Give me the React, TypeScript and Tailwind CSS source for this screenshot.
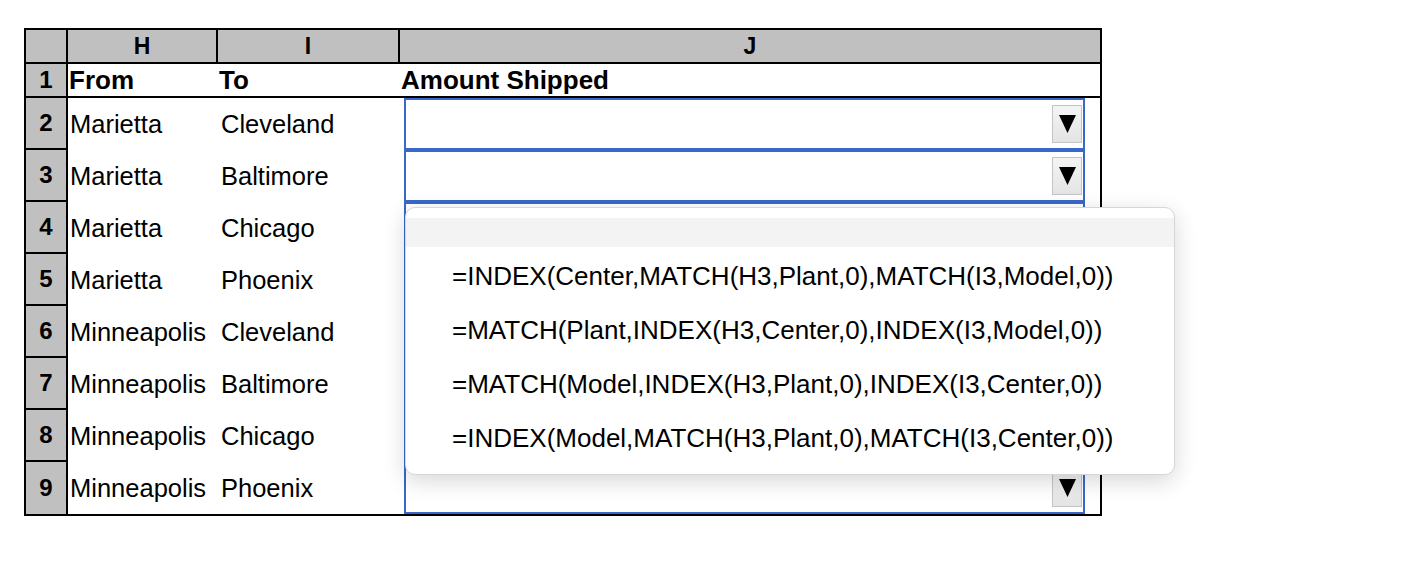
import React from 'react';

const font = { fontFamily: '"Liberation Sans", Arial, Helvetica, sans-serif' };

const rows = [
  { n: 2, from: 'Marietta', to: 'Cleveland' },
  { n: 3, from: 'Marietta', to: 'Baltimore' },
  { n: 4, from: 'Marietta', to: 'Chicago' },
  { n: 5, from: 'Marietta', to: 'Phoenix' },
  { n: 6, from: 'Minneapolis', to: 'Cleveland' },
  { n: 7, from: 'Minneapolis', to: 'Baltimore' },
  { n: 8, from: 'Minneapolis', to: 'Chicago' },
  { n: 9, from: 'Minneapolis', to: 'Phoenix' },
];

const options = [
  '=INDEX(Center,MATCH(H3,Plant,0),MATCH(I3,Model,0))',
  '=MATCH(Plant,INDEX(H3,Center,0),INDEX(I3,Model,0))',
  '=MATCH(Model,INDEX(H3,Plant,0),INDEX(I3,Center,0))',
  '=INDEX(Model,MATCH(H3,Plant,0),MATCH(I3,Center,0))',
];

const DropdownCell: React.FC = () => (
  <div className="ml-[4px] w-[681px] h-[52px] border-2 border-[#3a68c8] flex items-center justify-end pr-[1px]">
    <div className="w-[30px] h-[38px] bg-gradient-to-b from-[#f4f4f4] to-[#e4e4e4] border border-[#c4c4c4] flex items-center justify-center">
      <svg width="17" height="18" viewBox="0 0 17 18">
        <polygon points="0,0 17,0 8.5,18" fill="#000" />
      </svg>
    </div>
  </div>
);

export default function App() {
  return (
    <div className="relative w-[1428px] h-[568px] bg-white text-black" style={font}>
      <div className="absolute left-0 top-0 pl-[24px] pt-[28px]">
        <div className="w-[1078px] border-2 border-black">
          {/* column letters */}
          <div className="flex h-[34px] bg-[#c0c0c0] border-b-2 border-black font-bold text-[23px]">
            <div className="w-[42px] border-r-2 border-black" />
            <div className="w-[150px] border-r-2 border-black flex items-center justify-center">H</div>
            <div className="w-[182px] border-r-2 border-black flex items-center justify-center">I</div>
            <div className="flex-1 flex items-center justify-center">J</div>
          </div>

          {/* row 1: headings */}
          <div className="flex h-[34px] border-b-2 border-black">
            <div className="w-[42px] bg-[#c0c0c0] border-r-2 border-black flex items-center justify-center font-bold text-[24px]">1</div>
            <div className="w-[150px] pl-[1px] flex items-center font-bold text-[26px]">From</div>
            <div className="w-[182px] pl-[1px] flex items-center font-bold text-[26px]">To</div>
            <div className="flex-1 pl-[1px] flex items-center font-bold text-[26px]">Amount Shipped</div>
          </div>

          {rows.map((r, i) => (
            <div key={r.n} className="flex h-[52px]">
              <div
                className={
                  'w-[42px] bg-[#c0c0c0] border-r-2 border-black flex items-center justify-center font-bold text-[24px] ' +
                  (i < rows.length - 1 ? 'border-b-2' : '')
                }
              >
                {r.n}
              </div>
              <div className="w-[150px] pl-[2px] flex items-center text-[25.5px] whitespace-nowrap">{r.from}</div>
              <div className="w-[182px] pl-[3px] flex items-center text-[25.5px] whitespace-nowrap">{r.to}</div>
              <div className="flex-1">
                <DropdownCell />
              </div>
            </div>
          ))}
        </div>
      </div>

      {/* open dropdown list */}
      <div className="absolute left-[405px] top-[207px] w-[770px] h-[268px] bg-white rounded-[10px] border border-[#d6d6d6] shadow-[0_6px_22px_rgba(0,0,0,0.16)] pt-[10px]">
        <div className="h-[29px] bg-[#f3f3f3]" />
        <div className="pt-[2px]">
          {options.map((o) => (
            <div key={o} className="h-[54px] pl-[46px] flex items-center text-[26px] whitespace-nowrap">
              {o}
            </div>
          ))}
        </div>
      </div>
    </div>
  );
}
